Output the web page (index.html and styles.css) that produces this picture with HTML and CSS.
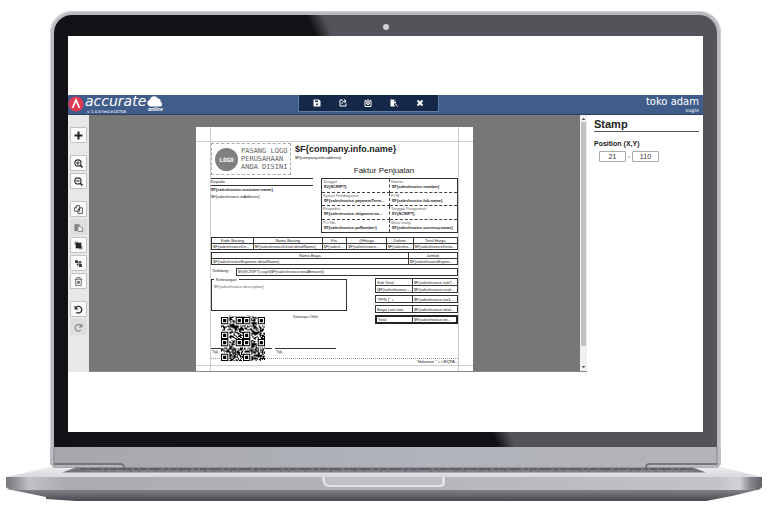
FILE: index.html
```
<!DOCTYPE html>
<html lang="id">
<head>
  <meta charset="UTF-8">
  <meta name="viewport" content="width=device-width, initial-scale=1.0">
  <title>Accurate Online - Desain Cetakan</title>
  <link rel="stylesheet" href="styles.css">
</head>
<body>

  <div class="laptop">
    <div class="lid">
      <div class="bezel">
        <span class="camera"></span>
        <div class="screen">

          <header class="topbar">
            <div class="brand">
              <svg class="brand-mark" viewBox="0 0 16 16">
                <circle cx="8" cy="8" r="7.6" fill="#e03a55"/>
                <path d="M4.6 12 8 4l3.4 8" fill="none" stroke="#fff" stroke-width="1.7"/>
              </svg>
              <div class="brand-text">
                <span class="brand-name">accurate</span>
                <span class="version">v 1.0.0-test#18706</span>
              </div>
              <div class="brand-cloud">
                <svg viewBox="0 0 18 12">
                  <path d="M4 11.5a3.4 3.4 0 0 1-.4-6.6A4.6 4.6 0 0 1 12 3.4a3 3 0 0 1 2.6 3.4A2.5 2.5 0 0 1 14.5 11.5z" fill="#fff"/>
                </svg>
                <span>online</span>
              </div>
            </div>

            <nav class="actions">
              <button type="button" aria-label="Simpan"><svg viewBox="0 0 16 16"><path fill="#fff" fill-rule="evenodd" d="M1 1h11l3 3v11H1zM4 3v3h6V3zM8 8.5a2 2 0 1 0 .01 4 2 2 0 0 0-.01-4z"/></svg></button>
              <button type="button" aria-label="Ekspor"><svg viewBox="0 0 16 16" fill="none" stroke="#fff" stroke-width="2"><path d="M8 2H2v12h12V9M6 10c0-4 3-6 8-6M10 1l4 3-3 4"/></svg></button>
              <button type="button" aria-label="Impor"><svg viewBox="0 0 16 16" fill="none" stroke="#fff" stroke-width="2"><path d="M5 3H2v12h12V3h-3M8 0v11M4 8l4 4 4-4M4 6h8"/></svg></button>
              <button type="button" aria-label="Pratinjau"><svg viewBox="0 0 16 16"><path fill="#fff" d="M1 1h7v5h4v2a3 3 0 0 0-2 6v1H1zM9 1l3 4H9z"/><path d="M10 9l5 6" stroke="#fff" stroke-width="2"/></svg></button>
              <button type="button" aria-label="Tutup"><svg viewBox="0 0 16 16"><path d="M3 3l10 10M13 3 3 13" stroke="#fff" stroke-width="4"/></svg></button>
            </nav>

            <div class="account">
              <span class="company">toko adam</span>
              <span class="user">sugie</span>
            </div>
          </header>

          <main class="editor">
            <aside class="tools">
              <div class="tool-group">
                <button type="button" aria-label="Tambah"><svg viewBox="0 0 16 16"><path d="M8 1v14M1 8h14" stroke="#222" stroke-width="3.6"/></svg></button>
              </div>
              <div class="tool-group">
                <button type="button" aria-label="Perbesar"><svg viewBox="0 0 16 16" fill="none" stroke="#333" stroke-width="2"><circle cx="7" cy="7" r="5.5"/><path d="M4 7h6M7 4v6"/><path d="M11 11l4 4" stroke-width="3"/></svg></button>
                <button type="button" aria-label="Perkecil"><svg viewBox="0 0 16 16" fill="none" stroke="#333" stroke-width="2"><circle cx="7" cy="7" r="5.5"/><path d="M4 7h6"/><path d="M11 11l4 4" stroke-width="3"/></svg></button>
              </div>
              <div class="tool-group">
                <button type="button" aria-label="Salin"><svg viewBox="0 0 16 16" fill="#fff" stroke="#444" stroke-width="1.5"><path d="M5 1h5v10H1V5zM5 1v4H1M10 5h5v10H7V8zM10 5v3H7"/></svg></button>
                <button type="button" aria-label="Tempel" disabled><svg viewBox="0 0 16 16"><path d="M1 2h9v3H6v9H1z" fill="#777"/><path d="M7 6h5l3 3v6H7z" fill="#eee" stroke="#777" stroke-width="1.5"/></svg></button>
                <button type="button" aria-label="Ke depan"><svg viewBox="0 0 16 16"><path d="M1 1h6v6H1zM9 9h6v6H9z" fill="#999"/><path d="M3 3h10v10H3z" fill="#222"/></svg></button>
                <button type="button" aria-label="Ke belakang"><svg viewBox="0 0 16 16"><path d="M5 4h8v8H5z" fill="#444"/><path d="M1 1h7v7H1zM8 8h7v7H8z" fill="#fff"/><path d="M2 2h5v5H2zM9 9h5v5H9z" fill="#333"/></svg></button>
                <button type="button" aria-label="Hapus"><svg viewBox="0 0 16 16" fill="none" stroke="#666" stroke-width="1.6"><path d="M1 4h14M5 4V1h6v3M3 4v11h10V4M6 7v5M8 7v5M10 7v5"/></svg></button>
              </div>
              <div class="tool-group">
                <button type="button" aria-label="Urungkan"><svg viewBox="0 0 16 16"><path d="M3 4.5C7 .5 14 3 14 8.5c0 5-6 7.5-10 4.5" fill="none" stroke="#333" stroke-width="2.4"/><path d="M1 1v7h7z" fill="#333"/></svg></button>
                <button type="button" aria-label="Ulangi" disabled><svg viewBox="0 0 16 16"><path d="M13 4.5C9 .5 2 3 2 8.5c0 5 6 7.5 10 4.5" fill="none" stroke="#888" stroke-width="2"/><path d="M15 1v7H8z" fill="#888"/></svg></button>
              </div>
            </aside>

            <section class="canvas">
              <article class="paper">
                <div class="paper-head">
                  <div class="logo-box">
                    <span class="logo-circle">LOGO</span>
                    <p>PASANG LOGO<br>PERUSAHAAN<br>ANDA DISINI</p>
                  </div>
                  <div class="paper-company">
                    <h1>$F{company.info.name}</h1>
                    <p>$F{company.info.address}</p>
                    <h2>Faktur Penjualan</h2>
                  </div>
                </div>

                <div class="parties">
                  <div class="customer">
                    <p class="customer-title">Kepada</p>
                    <p><b>$F{salesInvoice.customer.name}</b></p>
                    <p>$F{salesInvoice.toAddress}</p>
                  </div>
                  <table class="info">
                    <tr>
                      <td><span>Tanggal</span><b>$V{SCRIPT}</b></td>
                      <td><span>Nomor</span><b>$F{salesInvoice.number}</b></td>
                    </tr>
                    <tr>
                      <td><span>Syarat Pembayaran</span><b>$F{salesInvoice.paymentTerm...</b></td>
                      <td><span>FOB</span><b>$F{salesInvoice.fob.name}</b></td>
                    </tr>
                    <tr>
                      <td><span>Ekspedisi</span><b>$F{salesInvoice.shipment.na...</b></td>
                      <td><span>Tanggal Pengiriman</span><b>$V{SCRIPT}</b></td>
                    </tr>
                    <tr>
                      <td><span>PO No.</span><b>$F{salesInvoice.poNumber}</b></td>
                      <td><span>Mata Uang</span><b>$F{salesInvoice.currency.name}</b></td>
                    </tr>
                  </table>
                </div>

                <table class="lines items">
                  <tr><th>Kode Barang</th><th>Nama Barang</th><th>Kts.</th><th>@Harga</th><th>Diskon</th><th>Total Harga</th></tr>
                  <tr><td>$F{salesInvoiceDe...</td><td>$F{salesInvoiceDetail.detailName}</td><td>$F{salesI...</td><td>$F{salesInvoice...</td><td>$F{salesInv...</td><td>$F{salesInvoiceDetai...</td></tr>
                </table>

                <table class="lines expenses">
                  <tr><th>Nama Biaya</th><th>Jumlah</th></tr>
                  <tr><td>$F{salesInvoiceExpense.detailName}</td><td>$F{salesInvoiceExpen...</td></tr>
                </table>

                <div class="spelled">
                  <span>Terbilang :</span>
                  <p>$V{SCRIPT}.sayIt($F{salesInvoice.totalAmount})</p>
                </div>

                <div class="summary">
                  <div class="notes">
                    <fieldset>
                      <legend>Keterangan</legend>
                      <p>$F{salesInvoice.description}</p>
                    </fieldset>
                    <div class="signs">
                      <div class="sign"><p>Diproses Oleh</p><span>Tgl.</span></div>
                      <div class="sign"><p>Disetujui Oleh</p><span>Tgl.</span></div>
                      <svg class="stamp" id="stamp" viewBox="0 0 42 42"></svg>
                    </div>
                  </div>
                  <div class="totals">
                    <table class="lines">
                      <tr><td>Sub Total</td><td>$F{salesInvoice.subT...</td></tr>
                      <tr><td>($F{salesInvoice....</td><td>$F{salesInvoice.cash...</td></tr>
                    </table>
                    <table class="lines"><tr><td>"PPN (" +</td><td>$F{salesInvoice.tax1...</td></tr></table>
                    <table class="lines"><tr><td>Biaya Lain-lain</td><td>$F{salesInvoice.total...</td></tr></table>
                    <table class="lines grand"><tr><td>Total</td><td>$F{salesInvoice.tot...</td></tr></table>
                  </div>
                </div>

                <p class="paper-foot">"Halaman " + &lt;$V{PA...</p>
              </article>
            </section>

            <div class="scrollbar">
              <i class="arrow up"></i>
              <i class="thumb"></i>
              <i class="arrow down"></i>
            </div>

            <aside class="props">
              <h2>Stamp</h2>
              <h3>Position (X,Y)</h3>
              <div class="position">
                <input type="text" value="21" aria-label="X">
                <span>,</span>
                <input type="text" value="110" aria-label="Y">
              </div>
            </aside>
          </main>

        </div>
      </div>
    </div>

    <svg class="base" viewBox="0 0 768 65" preserveAspectRatio="none">
      <defs>
        <linearGradient id="chin" x1="0" x2="1">
          <stop offset="0" stop-color="#a6a7ab"/>
          <stop offset=".55" stop-color="#b0b3bb"/>
          <stop offset="1" stop-color="#b3b3b7"/>
        </linearGradient>
        <linearGradient id="deck" x1="0" x2="0" y1="0" y2="1">
          <stop offset="0" stop-color="#ececee"/>
          <stop offset="1" stop-color="#d9d9dc"/>
        </linearGradient>
        <linearGradient id="front" x1="0" x2="1">
          <stop offset="0" stop-color="#77787e"/>
          <stop offset=".012" stop-color="#8f9096"/>
          <stop offset=".03" stop-color="#c0c1c5"/>
          <stop offset=".08" stop-color="#abacb2"/>
          <stop offset=".5" stop-color="#b3b4ba"/>
          <stop offset=".94" stop-color="#c2c3c8"/>
          <stop offset=".97" stop-color="#d2d2d6"/>
          <stop offset=".985" stop-color="#85868c"/>
          <stop offset="1" stop-color="#606168"/>
        </linearGradient>
        <linearGradient id="under" x1="0" x2="0" y1="0" y2="1">
          <stop offset="0" stop-color="#85868b"/>
          <stop offset="1" stop-color="#4a4a50"/>
        </linearGradient>
      </defs>
      <path d="M50 20 6 30h756l-41-10z" fill="url(#deck)"/>
      <path d="M50 0h671v17l-3 4H54l-4-4z" fill="url(#chin)"/>
      <path d="M50 0h4v19l-4-3zM717 0h4v16l-4 3z" fill="#bcbcc2"/>
      <path d="M54 0v18M717 0v18" stroke="#85858b" fill="none"/>
      <path d="M76 20.5h617l13 5H62z" fill="#74757b"/>
      <path d="M80 22h612" stroke="#4a4b50" stroke-dasharray="7 2 12 3 4 2"/>
      <path d="M90 24h602" stroke="#8b8c92" stroke-dasharray="14 3 6 2"/>
      <path d="M54 17h67q3 0 3 4M717 17h-68q-3 0-3 4" fill="none" stroke="#66676c" stroke-width="1.5"/>
      <path d="M55 19h66M716 19h-66" stroke="#c2c2c7"/>
      <path d="M7 42 46 50v2l30 2h630l26-5 29-7z" fill="url(#under)"/>
      <path d="M6 30h756v10q-1 2-5 3H13q-6-1-7-3z" fill="url(#front)"/>
      <path d="M322 30h123v6q0 4-5 4H329q-7 0-7-10z" fill="#e2e2e6"/>
      <path d="M325 30h117v5q0 3-4 3H331q-5 0-6-4z" fill="#bfc0c5"/>
    </svg>
  </div>

  <script src="script.js"></script>
</body>
</html>
```
FILE: styles.css
```
* {
  box-sizing: border-box;
}

body {
  margin: 0;
  background: #fff;
  color: #222;
  font-family: "Liberation Sans", Arial, sans-serif;
}

h1, h2, h3, p {
  margin: 0;
}

button {
  display: flex;
  align-items: center;
  justify-content: center;
  padding: 0;
  border: 0;
  background: none;
}

/* laptop */
.laptop {
  padding-top: 11px;
}

.lid {
  margin: 0 47px 0 50px;
  padding: 4px 4px 0;
  background: #b9b9bf;
  border-radius: 22px 22px 0 0;
  box-shadow: inset 1px 1px 1px #d6d6da, inset -1px 0 1px #d6d6da;
}

.bezel {
  display: flex;
  flex-direction: column;
  align-items: center;
  padding: 0 14px 15px;
  background: linear-gradient(66deg, #121216 52%, #545359 54%);
  border-radius: 18px 18px 0 0;
}

.camera {
  width: 6px;
  height: 6px;
  margin: 9px 0 6px;
  border-radius: 50%;
  background: #d3d3d6;
}

.screen {
  width: 100%;
  padding: 59px 0 60px;
  background: #fff;
}

.base {
  display: block;
  width: 100%;
  height: 65px;
}

/* header */
.topbar {
  display: grid;
  grid-template-columns: 230px 141px 1fr;
  height: 20px;
  background: #405c8a;
  border-bottom: 1px solid #2c4063;
  color: #fff;
}

.brand {
  display: flex;
}

.brand-mark {
  width: 16px;
  height: 16px;
  margin-top: 1px;
}

.brand-text {
  display: flex;
  flex-direction: column;
  gap: 2px;
  padding-left: 1px;
}

.brand-name {
  font: italic 14px/13px "DejaVu Sans", sans-serif;
}

.version {
  padding-left: 2px;
  font: 4px/4px "DejaVu Sans", sans-serif;
}

.brand-cloud {
  display: flex;
  flex-direction: column;
  align-items: center;
}

.brand-cloud svg {
  width: 18px;
  height: 12px;
}

.brand-cloud span {
  font: italic bold 5px/5px "Noto Sans", sans-serif;
}

.actions {
  display: flex;
  align-items: center;
  justify-content: space-around;
  height: 17px;
  padding: 0 5px;
  background: #152848;
  border: 1px solid #5f7ba6;
  border-top: 0;
}

.actions svg {
  width: 8px;
  height: 8px;
}

.account {
  display: flex;
  flex-direction: column;
  align-items: flex-end;
  padding-right: 4px;
}

.company {
  font: 10px/13px "DejaVu Sans", sans-serif;
}

.user {
  font: 5px/5px "DejaVu Sans", sans-serif;
}

/* editor */
.editor {
  display: flex;
}

.tools {
  display: flex;
  flex-direction: column;
  gap: 12px;
  width: 21px;
  padding: 12px 2px 0;
  background: #e8e8e8;
}

.tool-group {
  display: flex;
  flex-direction: column;
  gap: 2px;
}

.tools button {
  width: 17px;
  height: 16px;
  background: #fafafa;
  border: 1px solid #c2c2c2;
  border-radius: 1px;
}

.tools button:disabled {
  background: #dedede;
  border-color: #dedede;
}

.tools svg {
  width: 9px;
  height: 9px;
}

.canvas {
  flex: 1;
  display: flex;
  justify-content: center;
  padding: 12px 0 0;
  background: #777;
  border-bottom: 1px solid #888;
}

/* page margins are drawn as guide lines */
.paper {
  width: 277px;
  padding: 16px 15px 7px;
  color: #222;
  font-size: 4px;
  line-height: 5px;
  background:
    linear-gradient(#ccc, #ccc) 14px 0 / 1px 100% no-repeat,
    linear-gradient(#ccc, #ccc) 262px 0 / 1px 100% no-repeat,
    linear-gradient(#ccc, #ccc) 0 14px / 100% 1px no-repeat,
    linear-gradient(#ccc, #ccc) 0 238px / 100% 1px no-repeat,
    #fff;
}

.paper-head {
  display: flex;
  gap: 4px;
  height: 35px;
}

.logo-box {
  display: flex;
  align-items: center;
  gap: 3px;
  width: 80px;
  height: 32px;
  padding-left: 3px;
  border: 1px dashed #aaa;
  color: #666;
  font: 7px/8px "DejaVu Sans Mono", monospace;
  white-space: nowrap;
}

.logo-circle {
  width: 23px;
  height: 23px;
  border-radius: 50%;
  background: #808080;
  color: #fff;
  font: bold 6px/23px "DejaVu Sans Mono", monospace;
  text-align: center;
}

.paper-company {
  flex: 1;
}

.paper-company h1 {
  font-size: 9px;
  line-height: 12px;
}

.paper-company h2 {
  padding: 5px 0 0 15px;
  font-size: 8px;
  line-height: 9px;
  font-weight: normal;
  text-align: center;
}

.paper-company p {
  font-size: 4px;
  line-height: 6px;
}

.parties {
  display: flex;
  justify-content: space-between;
  margin-bottom: 4px;
}

.customer {
  width: 102px;
  line-height: 7px;
}

.customer-title {
  border: solid #333;
  border-width: 1px 0;
  line-height: 6px;
}

table {
  border-collapse: collapse;
  table-layout: fixed;
}

td, th {
  padding: 0 1px;
  overflow: hidden;
  white-space: nowrap;
  font-weight: normal;
}

.info {
  width: 137px;
  height: 55px;
  border: 1px solid #333;
}

.info td {
  border: 1px dashed #444;
  vertical-align: top;
}

.info span, .info b {
  display: block;
}

.info span {
  color: #666;
  line-height: 5px;
}

.info b {
  padding-left: 1px;
  line-height: 6px;
}

.lines {
  width: 100%;
}

.lines td, .lines th {
  height: 6px;
  border: 1px solid #333;
}

.items {
  margin-bottom: 2px;
}

.items th:nth-child(1) { width: 17%; }
.items th:nth-child(2) { width: 28%; }
.items th:nth-child(3) { width: 10%; }
.items th:nth-child(4) { width: 16%; }
.items th:nth-child(5) { width: 11%; }

.expenses {
  margin-bottom: 3px;
}

.expenses th:last-child {
  width: 20%;
}

.spelled {
  display: flex;
}

.spelled span {
  width: 25px;
  padding-left: 1px;
}

.spelled p {
  flex: 1;
  padding: 1px;
  border: 1px solid #333;
  line-height: 4px;
}

.summary {
  display: flex;
  justify-content: space-between;
  align-items: flex-start;
  padding-top: 1px;
}

.notes {
  width: 136px;
}

.notes fieldset {
  height: 34px;
  margin: 0 0 3px;
  padding: 2px;
  border: 1px solid #333;
}

.notes legend {
  padding: 0 2px;
}

.notes fieldset p {
  color: #666;
}

.signs {
  display: flex;
  gap: 3px;
  position: relative;
}

.sign {
  width: 61px;
}

.sign p {
  height: 35px;
  border-bottom: 1px solid #333;
  text-align: center;
}

.sign span {
  line-height: 6px;
  padding-left: 1px;
}

/* the stamp lies over the first signature */
.stamp {
  position: absolute;
  top: 3px;
  left: 10px;
  width: 44px;
  height: 44px;
  background: #fff;
}

.totals {
  display: flex;
  flex-direction: column;
  gap: 2px;
  width: 83px;
  padding-top: 1px;
}

.totals td {
  height: 7px;
}

.totals td:first-child {
  width: 45%;
}

.grand {
  border: 2px solid #222;
}

.paper-foot {
  margin-top: 3px;
  border-top: 1px dotted #999;
  text-align: right;
}

.scrollbar {
  display: flex;
  flex-direction: column;
  align-items: center;
  justify-content: space-between;
  width: 7px;
  padding: 3px 0;
  background: #f1f1f1;
  border-bottom: 1px solid #888;
}

.thumb {
  flex: 1;
  width: 5px;
  margin: 2px 0 20px;
  background: #c1c1c1;
}

.arrow {
  width: 4px;
  height: 2px;
  background: #505050;
}

.up {
  clip-path: polygon(50% 0, 100% 100%, 0 100%);
}

.down {
  clip-path: polygon(0 0, 100% 0, 50% 100%);
}

/* properties */
.props {
  width: 116px;
  padding: 3px 4px 0 7px;
}

.props h2 {
  border-bottom: 1px solid #555;
  font-size: 11px;
  line-height: 13px;
}

.props h3 {
  margin: 7px 0 2px;
  font-size: 7px;
  line-height: 10px;
}

.position {
  display: flex;
  gap: 2px;
  padding-left: 5px;
  font-size: 7px;
}

.position input {
  width: 27px;
  height: 11px;
  padding: 0;
  border: 1px solid #aaa;
  border-radius: 1px;
  color: #333;
  font: 7px/9px "Liberation Sans", Arial, sans-serif;
  text-align: center;
}
```
FILE: script.js
```
const stamp = document.getElementById("stamp");
const size = 21;
let seed = 110;

function random() {
  seed = (seed * 16807) % 2147483647;
  return seed / 2147483647;
}

// three corner squares, null outside of them
function corner(x, y) {
  const left = x < 8, right = x > size - 9, top = y < 8, bottom = y > size - 9;
  if (!((left && top) || (right && top) || (left && bottom))) return null;
  const cx = right ? size - 4 : 3;
  const cy = bottom ? size - 4 : 3;
  const ring = Math.max(Math.abs(x - cx), Math.abs(y - cy));
  return ring === 3 || ring < 2;
}

let d = "";
for (let row = 0; row < 2; row++) {
  for (let col = 0; col < 2; col++) {
    for (let y = 0; y < size; y++) {
      for (let x = 0; x < size; x++) {
        const fixed = corner(x, y);
        const on = fixed === null ? random() < 0.6 : fixed;
        if (on) d += `M${col * size + x} ${row * size + y}h1v1h-1z`;
      }
    }
  }
}

const path = document.createElementNS("http://www.w3.org/2000/svg", "path");
path.setAttribute("d", d);
stamp.appendChild(path);
```
